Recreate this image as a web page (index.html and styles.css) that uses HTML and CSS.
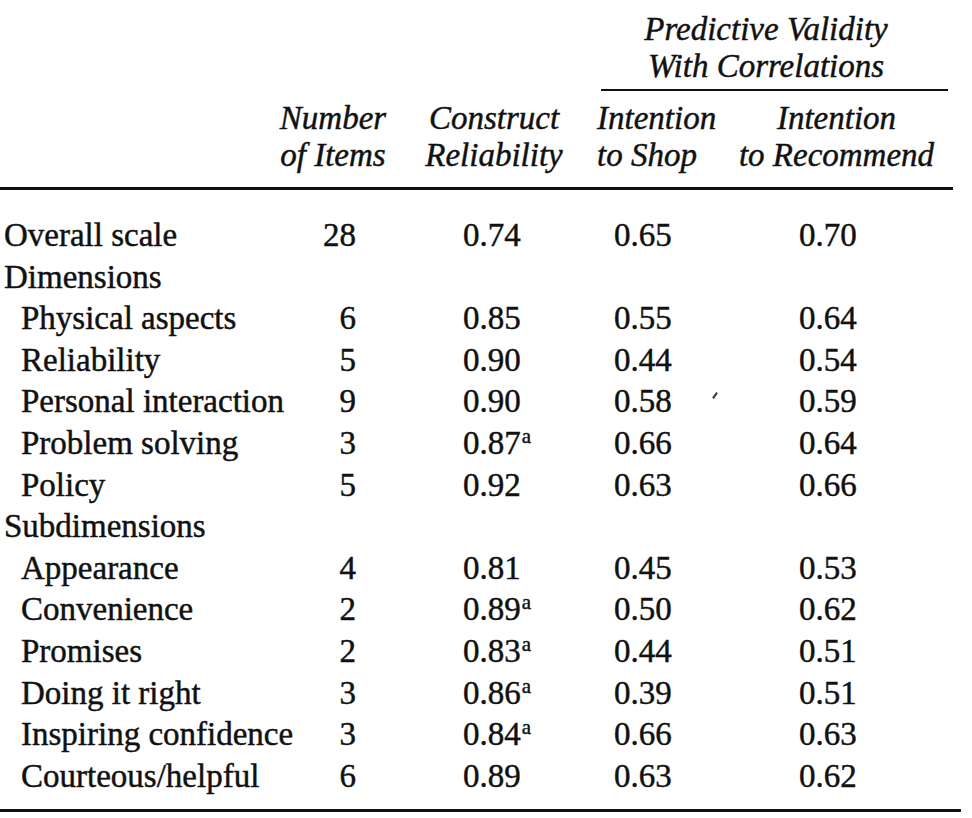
FILE: index.html
```html
<!DOCTYPE html>
<html lang="en">
<head>
<meta charset="utf-8">
<title>Scale reliability and predictive validity</title>
<link rel="stylesheet" href="styles.css">
</head>
<body>
<div class="table">
  <div class="row head-top">
    <div class="spacer"></div>
    <div class="group">Predictive Validity<br>With Correlations</div>
  </div>
  <div class="row head-cols">
    <div class="cell"></div>
    <div class="cell h-num">Number<br>of Items</div>
    <div class="cell h-rel">Construct<br>Reliability</div>
    <div class="cell h-shop">Intention<br>to Shop</div>
    <div class="cell h-rec">Intention<br>to Recommend</div>
  </div>
  <div class="tbody">
    <div class="row"><div class="lab">Overall scale</div><div class="num">28</div><div class="rel">0.74</div><div class="shop">0.65</div><div class="rec">0.70</div></div>
    <div class="row"><div class="lab">Dimensions</div></div>
    <div class="row"><div class="lab sub">Physical aspects</div><div class="num">6</div><div class="rel">0.85</div><div class="shop">0.55</div><div class="rec">0.64</div></div>
    <div class="row"><div class="lab sub">Reliability</div><div class="num">5</div><div class="rel">0.90</div><div class="shop">0.44</div><div class="rec">0.54</div></div>
    <div class="row"><div class="lab sub">Personal interaction</div><div class="num">9</div><div class="rel">0.90</div><div class="shop">0.58</div><div class="rec">0.59</div></div>
    <div class="row"><div class="lab sub">Problem solving</div><div class="num">3</div><div class="rel">0.87<sup class="note">a</sup></div><div class="shop">0.66</div><div class="rec">0.64</div></div>
    <div class="row"><div class="lab sub">Policy</div><div class="num">5</div><div class="rel">0.92</div><div class="shop">0.63</div><div class="rec">0.66</div></div>
    <div class="row"><div class="lab">Subdimensions</div></div>
    <div class="row"><div class="lab sub">Appearance</div><div class="num">4</div><div class="rel">0.81</div><div class="shop">0.45</div><div class="rec">0.53</div></div>
    <div class="row"><div class="lab sub">Convenience</div><div class="num">2</div><div class="rel">0.89<sup class="note">a</sup></div><div class="shop">0.50</div><div class="rec">0.62</div></div>
    <div class="row"><div class="lab sub">Promises</div><div class="num">2</div><div class="rel">0.83<sup class="note">a</sup></div><div class="shop">0.44</div><div class="rec">0.51</div></div>
    <div class="row"><div class="lab sub">Doing it right</div><div class="num">3</div><div class="rel">0.86<sup class="note">a</sup></div><div class="shop">0.39</div><div class="rec">0.51</div></div>
    <div class="row"><div class="lab sub">Inspiring confidence</div><div class="num">3</div><div class="rel">0.84<sup class="note">a</sup></div><div class="shop">0.66</div><div class="rec">0.63</div></div>
    <div class="row"><div class="lab sub">Courteous/helpful</div><div class="num">6</div><div class="rel">0.89</div><div class="shop">0.63</div><div class="rec">0.62</div></div>
    <span class="speck"></span>
  </div>
</div>
</body>
</html>
```
FILE: styles.css
```css
html, body {
  margin: 0;
  padding: 0;
  background: #ffffff;
}

body {
  font-family: "Liberation Serif", "Times New Roman", serif;
  font-size: 33px;
  color: #111111;
  -webkit-text-stroke: 0.45px #111111;
}

.table {
  width: 961px;
  padding-top: 11px;
}

.row {
  display: grid;
  grid-template-columns: 270px 140px 168px 154px 229px;
}

/* group header */
.head-top {
  line-height: 37px;
}

.head-top .spacer {
  grid-column: 1 / span 3;
}

.group {
  grid-column: 4 / span 2;
  margin-left: 23px;
  margin-right: 13px;
  padding-right: 17px;
  padding-bottom: 4px;
  border-bottom: 2px solid #111111;
  text-align: center;
  font-style: italic;
}

/* column headers */
.head-cols {
  width: 953px;
  grid-template-columns: 270px 140px 168px 154px 221px;
  line-height: 37px;
  font-style: italic;
  padding-top: 9px;
  padding-bottom: 13px;
  border-bottom: 3px solid #111111;
}

.h-num {
  text-align: center;
  padding-right: 14px;
}

.h-rel {
  text-align: center;
}

.h-shop {
  text-align: left;
  padding-left: 19px;
}

.h-rec {
  text-align: center;
  padding-right: 12px;
}

/* body */
.tbody {
  position: relative;
  padding-top: 25px;
  padding-bottom: 12px;
  border-bottom: 3px solid #111111;
  line-height: 41.6px;
}

.lab {
  grid-column: 1;
  padding-left: 4px;
  white-space: nowrap;
}

.lab.sub {
  padding-left: 21px;
}

.num {
  text-align: right;
  padding-right: 54px;
}

.rel {
  padding-left: 53px;
}

.shop {
  padding-left: 36px;
}

.rec {
  padding-left: 67px;
}

.note {
  font-size: 21px;
  line-height: 0;
  vertical-align: 11px;
  margin-left: 1px;
}

.speck {
  position: absolute;
  left: 714px;
  top: 202px;
  width: 2px;
  height: 7px;
  background: #333333;
  transform: rotate(35deg);
}
```
